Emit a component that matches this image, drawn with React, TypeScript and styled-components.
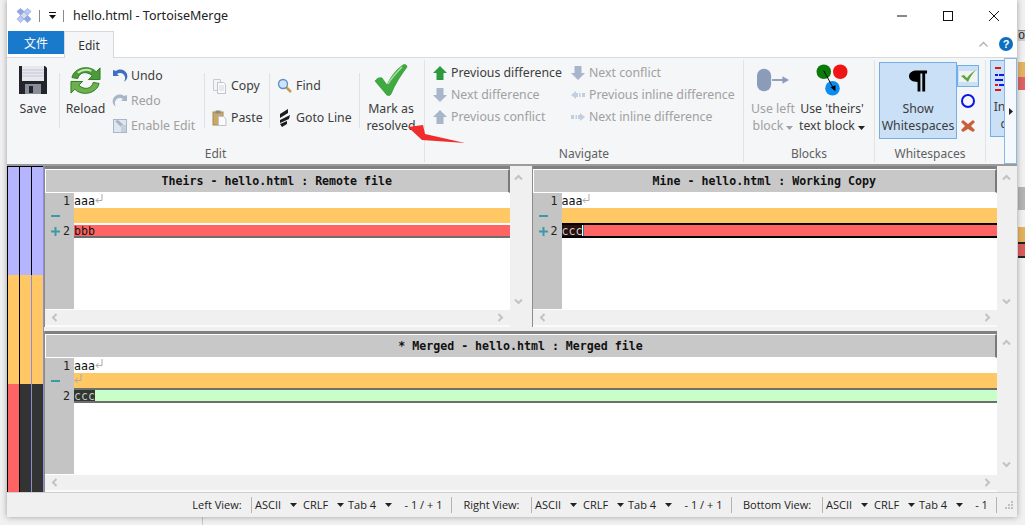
import { FC, ReactNode } from 'react';
import styled, { createGlobalStyle } from 'styled-components';

const GlobalStyle = createGlobalStyle`
  html, body {
    margin: 0;
    padding: 0;
    height: 525px;
    overflow: hidden;
    background: #f1f1f1;
  }
  * { box-sizing: border-box; }
`;

const Desktop = styled.div`
  position: relative;
  width: 1025px;
  height: 525px;
  padding: 0 8px 8px 7px;
  background: #f1f1f1;
  overflow: hidden;
`;

// bits of the window behind this one
const BackEdge = styled.div<{ $top: number; $h: number; $color: string }>`
  position: absolute;
  right: 0;
  width: 7px;
  top: ${({ $top }) => $top}px;
  height: ${({ $h }) => $h}px;
  background: ${({ $color }) => $color};
  font-family: "Liberation Mono", monospace;
  font-size: 12px;
  line-height: 10px;
  overflow: hidden;
  color: #222;
`;

const BackLine = styled.div`
  position: absolute;
  left: 202px;
  top: 517px;
  width: 1px;
  height: 8px;
  background: #c8c8c8;
`;

const Window = styled.div`
  position: relative;
  width: 1010px;
  height: 517px;
  background: #fff;
  display: flex;
  flex-direction: column;
  font-family: "Noto Sans", "Noto Sans CJK SC", sans-serif;
  font-size: 12.3px;
  color: #3c3c3c;
  box-shadow: 0 0 6px rgba(0, 0, 0, 0.35);
`;

const TitleBar = styled.div`
  height: 31px;
  display: flex;
  align-items: center;
  padding-left: 9px;
  background: #fff;
`;

const TitleSep = styled.div`
  width: 1px;
  height: 12px;
  background: #8a8a8a;
  margin: 0 9px 0 7px;
`;

const TitleText = styled.div`
  font-size: 12.5px;
  color: #222;
`;

const WindowButtons = styled.div`
  margin-left: auto;
  display: flex;
`;

const WindowButton = styled.div`
  width: 46px;
  height: 31px;
  display: flex;
  align-items: center;
  justify-content: center;
`;

const TabRow = styled.div`
  height: 26px;
  display: flex;
  position: relative;
  padding-left: 1px;
  background: #fff;
`;

const FileTab = styled.div`
  width: 56px;
  height: 23px;
  background: #1979ca;
  color: #fff;
  display: flex;
  align-items: center;
  justify-content: center;
  font-size: 12px;
`;

const EditTab = styled.div`
  width: 50px;
  height: 27px;
  background: #f5f6f7;
  border: 1px solid #d5d7da;
  border-bottom: none;
  display: flex;
  align-items: center;
  justify-content: center;
  font-size: 12px;
  color: #333;
  z-index: 1;
`;

const TabRight = styled.div`
  margin-left: auto;
  display: flex;
  align-items: center;
  gap: 11px;
  padding-right: 4px;
  height: 26px;
`;

const Ribbon = styled.div`
  height: 109px;
  flex: none;
  background: #f5f6f7;
  border-top: 1px solid #d8dadd;
  border-bottom: 2px solid #9b9b9b;
  display: flex;
  overflow: hidden;
  position: relative;
`;

const Group = styled.div<{ $w: number }>`
  width: ${({ $w }) => $w}px;
  flex: none;
  display: flex;
  flex-direction: column;
  border-right: 1px solid #e2e3e5;
  margin: 2px 0;
`;

const GroupBody = styled.div<{ $pad?: number }>`
  height: 85px;
  display: flex;
  padding-left: ${({ $pad }) => $pad ?? 0}px;
`;

const GroupLabel = styled.div`
  height: 17px;
  text-align: center;
  font-size: 12px;
  line-height: 17px;
  color: #5f5f5f;
`;

const LargeButton = styled.div<{ $w: number; $off?: boolean; $on?: boolean }>`
  width: ${({ $w }) => $w}px;
  flex: none;
  height: ${({ $on }) => ($on ? 77 : 78)}px;
  margin-top: ${({ $on }) => ($on ? 2 : 0)}px;
  display: flex;
  flex-direction: column;
  align-items: center;
  text-align: center;
  line-height: 17px;
  padding-top: 3px;
  color: ${({ $off }) => ($off ? '#a0a0a0' : '#3c3c3c')};
  ${({ $on }) => $on && 'background: #c9e0f7; border: 1px solid #75aee4;'}
  white-space: nowrap;
`;

const ClippedButton = styled(LargeButton)`
  margin-left: 4px;
`;

const LargeIcon = styled.div<{ $h: number }>`
  height: ${({ $h }) => $h}px;
  display: flex;
  align-items: center;
  justify-content: center;
`;

const LargeLabel = styled.span<{ $top?: number }>`
  margin-top: ${({ $top }) => $top ?? 3}px;
`;

const VSep = styled.div`
  width: 1px;
  height: 55px;
  margin: 13px 4px 0 0;
  background: #e0e1e3;
  flex: none;
`;

const Stack = styled.div<{ $gap: number; $top: number; $w: number; $left?: number }>`
  width: ${({ $w }) => $w}px;
  flex: none;
  display: flex;
  flex-direction: column;
  gap: ${({ $gap }) => $gap}px;
  padding-top: ${({ $top }) => $top}px;
  padding-left: ${({ $left }) => $left ?? 0}px;
`;

const SmallButton = styled.div<{ $off?: boolean }>`
  height: 16px;
  display: flex;
  align-items: center;
  gap: 3px;
  white-space: nowrap;
  line-height: 16px;
  color: ${({ $off }) => ($off ? '#a0a0a0' : '#3c3c3c')};
`;

const IconSlot = styled.span`
  width: 16px;
  height: 16px;
  flex: none;
  display: flex;
  align-items: center;
  justify-content: center;
`;

const MiniToggle = styled.div<{ $on?: boolean }>`
  width: 22px;
  height: 22px;
  display: flex;
  align-items: center;
  justify-content: center;
  ${({ $on }) => $on && 'background: #c9e0f7; border: 1px solid #75aee4;'}
`;

const ScrollTab = styled.div`
  position: absolute;
  right: 0;
  top: 0;
  bottom: 0;
  width: 13px;
  background: #f5f8fc;
  border: 1px solid #8ab8e6;
  display: flex;
  align-items: center;
  justify-content: center;
`;

const Arrow = styled.svg`
  position: absolute;
  left: 401px;
  top: 124px;
  z-index: 5;
`;

const Turned = styled.svg<{ $turn?: string }>`
  transform: ${({ $turn }) => $turn ?? 'none'};
  flex: none;
`;

const Workspace = styled.div`
  flex: 1;
  display: flex;
  background: #f0f0f0;
  min-height: 0;
`;

const Locator = styled.div`
  width: 37px;
  flex: none;
  display: flex;
  padding: 1px 0 0 1px;
  border-right: 1px solid #8c8cd8;
  background: #000;
  gap: 1px;
`;

const LocatorColumn = styled.div`
  flex: 1;
  display: flex;
  flex-direction: column;
`;

const LocatorBlock = styled.div<{ $h: number; $color: string; $edge?: boolean }>`
  height: ${({ $h }) => $h}px;
  background: ${({ $color }) => $color};
  ${({ $edge }) => $edge && 'box-shadow: -1px 0 0 #8c8cd8;'}
`;

const Views = styled.div`
  flex: 1;
  display: flex;
  flex-direction: column;
  gap: 4px;
  min-width: 0;
  padding-right: 2px;
`;

const TopViews = styled.div`
  height: 161px;
  flex: none;
  display: flex;
  gap: 4px;
`;

const Pane = styled.div`
  flex: 1;
  min-width: 0;
  min-height: 0;
  display: flex;
  border-left: 1px solid #8c8c8c;
`;

const ViewColumn = styled.div`
  flex: 1;
  min-width: 0;
  display: flex;
  flex-direction: column;
  background: #fff;
  border-top: 3px solid #808080;
`;

const PaneHeader = styled.div`
  height: 24px;
  flex: none;
  background: #c8c8c8;
  border: 1px solid #fff;
  border-right: 2px solid #7a7a7a;
  display: flex;
  align-items: center;
  justify-content: center;
  font-family: "DejaVu Sans Mono", monospace;
  font-weight: 700;
  font-size: 11.6px;
  color: #111;
`;

const CodeArea = styled.div`
  flex: 1;
  min-height: 0;
  background: #fff;
  overflow: hidden;
`;

const CodeRow = styled.div`
  height: 15px;
  display: flex;
`;

const Gutter = styled.div`
  width: 29px;
  flex: none;
  height: 15px;
  background: #c4c4c4;
  position: relative;
  text-align: right;
  padding-right: 4px;
  font-family: "DejaVu Sans Mono", monospace;
  font-size: 11.6px;
  line-height: 16px;
  color: #222;
`;

const GutterFill = styled.div`
  width: 29px;
  height: 71px;
  background: #c4c4c4;
`;

const CodeLine = styled.div<{ $bg: string; $above?: string; $below?: string }>`
  flex: 1;
  min-width: 0;
  height: 15px;
  background: ${({ $bg }) => $bg};
  ${({ $above, $below }) => $above && $below && `border-top: 2px solid ${$above}; border-bottom: 2px solid ${$below};`}
  display: flex;
  font-family: "DejaVu Sans Mono", monospace;
  font-size: 11.6px;
  line-height: ${({ $above }) => ($above ? 12 : 16)}px;
  color: #111;
`;

const InvertedText = styled.span<{ $bg: string }>`
  background: ${({ $bg }) => $bg};
  color: #c8c8c8;
  height: 11px;
  line-height: 12px;
`;

const Caret = styled.span`
  width: 2px;
  height: 11px;
  background: #0f8a8a;
  border-left: 1px solid #fff;
`;

const VScroll = styled.div<{ $bottom: number }>`
  width: 18px;
  flex: none;
  background: #f0f0f0;
  display: flex;
  flex-direction: column;
  justify-content: space-between;
  align-items: center;
  padding: 8px 0 ${({ $bottom }) => $bottom}px;
`;

const HScroll = styled.div`
  height: 17px;
  flex: none;
  background: #f0f0f0;
  border-bottom: 2px solid #fafafa;
  display: flex;
  justify-content: space-between;
  align-items: center;
  padding: 0 5px;
`;

const StatusBar = styled.div`
  height: 25px;
  flex: none;
  background: #f0f0f0;
  border-top: 1px solid #d0d0d0;
  padding-bottom: 1px;
  display: flex;
  justify-content: flex-end;
  align-items: center;
  font-family: "Open Sans", "Liberation Sans", sans-serif;
  font-size: 11px;
  color: #222;
`;

const StatusCell = styled.div<{ $w: number; $center?: boolean; $left?: number }>`
  width: ${({ $w }) => $w}px;
  flex: none;
  display: flex;
  align-items: center;
  justify-content: ${({ $center }) => ($center ? 'center' : 'flex-start')};
  white-space: nowrap;
  gap: 9px;
  padding-left: ${({ $left }) => $left ?? 0}px;
`;

const StatusSep = styled.div`
  width: 1px;
  height: 16px;
  background: #b4b4b4;
  flex: none;
`;

const Grip = styled.svg`
  margin: 0 4px 0 8px;
  flex: none;
`;

const MarkSvg = styled.svg<{ $top: number }>`
  position: absolute;
  left: 6px;
  top: ${({ $top }) => $top}px;
`;

const ReturnSvg = styled.svg`
  margin-top: 1px;
  flex: none;
`;

const DropCaret: FC<{ color?: string }> = ({ color }) => (
  <svg width="7" height="4" viewBox="0 0 7 4"><path d="M0 0h7L3.500 4z" fill={color ?? '#222'} /></svg>
);

const Chevron: FC<{ dir: 'up' | 'down' | 'left' | 'right' }> = ({ dir }) => {
  const rot = { up: 0, down: 180, left: 270, right: 90 }[dir];
  return (
    <Turned $turn={`rotate(${rot}deg)`} width="9" height="7" viewBox="0 0 9 7">
      <path d="M1 5.500 4.500 2 8 5.500" fill="none" stroke="#c2c2c2" strokeWidth="2" />
    </Turned>
  );
};

const AppIcon = () => (
  <svg width="16" height="15" viewBox="0 0 18 16">
    <g stroke="#6f86c8" strokeWidth="0.5">
      <path d="M5 0 9 3.500 5 7.500 1 3.500z" fill="#8ea6e4" />
      <path d="M13 0 17 3.500 13 7.500 9 3.500z" fill="#b8c8f0" />
      <path d="M5 8 9 12 5 16 1 12z" fill="#b8c8f0" />
      <path d="M13 8 17 12 13 16 9 12z" fill="#8ea6e4" />
      <path d="M9 4 13 8 9 12 5 8z" fill="#d6def5" />
    </g>
  </svg>
);

const SaveIcon = () => (
  <svg width="30" height="30" viewBox="0 0 30 30">
    <path d="M1 1h26l2 2v26H1z" fill="#22262c" />
    <rect x="4" y="1" width="22" height="15" fill="#e6e8ee" />
    <path d="M4 5h22M4 8h22M4 11h22" stroke="#c3c7d2" />
    <rect x="7" y="19" width="16" height="10" fill="#8a8e98" />
    <rect x="11" y="21" width="4" height="7" fill="#22262c" />
  </svg>
);

const ReloadIcon = () => (
  <svg width="33" height="31" viewBox="0 0 34 32">
    <path d="M3 13C5 3 20-1 28 7l4-4v12H20l4-4C18 6 11 7 9 14z" fill="#4d9a3a" stroke="#2f7a20" />
    <path d="M31 19c-2 10-17 14-25 6l-4 4V17h12l-4 4c6 5 13 4 15-3z" fill="#6cb04f" stroke="#2f7a20" />
    <path d="M9 8c4-3 9-4 14-2" stroke="#c6e8b4" strokeWidth="2" fill="none" />
  </svg>
);

const UndoIcon = () => (
  <svg width="16" height="16" viewBox="0 0 16 16">
    <path d="M1 2v6h6L5 6c3-2 7-1 8 3 .3 1.500 0 3-1 5 3-2 4-5 3-8-1.500-4-7-6-11-3z" fill="#3f6fc4" />
  </svg>
);

const RedoIcon = () => (
  <Turned $turn="scaleX(-1)" width="16" height="16" viewBox="0 0 16 16">
    <path d="M1 2v6h6L5 6c3-2 7-1 8 3 .3 1.500 0 3-1 5 3-2 4-5 3-8-1.500-4-7-6-11-3z" fill="#a8b6cc" />
  </Turned>
);

const EnableEditIcon = () => (
  <svg width="16" height="16" viewBox="0 0 16 16">
    <rect x="1.500" y="1.500" width="13" height="13" fill="#dfe6ef" stroke="#a9b5c6" />
    <path d="M3 3l8 8 3-2-8-7z" fill="#a7b4c8" />
    <path d="M9 7h5v7H9z" fill="#c3cfdf" />
  </svg>
);

const CopyIcon = () => (
  <svg width="16" height="16" viewBox="0 0 16 16">
    <path d="M1.500 1.500h7v11h-7z" fill="#f4f4f4" stroke="#c8ccd2" />
    <path d="M5.500 4.500h6l2 2v9h-8z" fill="#fafafa" stroke="#bfc3ca" />
    <path d="M7 8h5M7 10h5M7 12h5" stroke="#d4d7dc" />
  </svg>
);

const PasteIcon = () => (
  <svg width="16" height="16" viewBox="0 0 16 16">
    <rect x="1" y="2" width="10" height="13" fill="#c9a86a" stroke="#a88a50" />
    <rect x="3.500" y="0.500" width="5" height="3" fill="#8a8a8a" />
    <path d="M6.500 6.500h5l2.500 2.500v6.500h-7.500z" fill="#fafafa" stroke="#bfc3ca" />
  </svg>
);

const FindIcon = () => (
  <svg width="16" height="16" viewBox="0 0 16 16">
    <path d="M9 9l5 5" stroke="#c89a48" strokeWidth="2.500" />
    <circle cx="6" cy="6" r="4.500" fill="#cfe4f8" stroke="#5a8ec4" strokeWidth="1.300" />
  </svg>
);

const GotoIcon = () => (
  <svg width="16" height="18" viewBox="0 0 16 18">
    <path d="M11 0 3 5v4l8-5zM13 6 3 11v3l9-4zM10 12l-7 3 2 3 5-3z" fill="#1c1c1c" />
  </svg>
);

const CheckIcon = () => (
  <svg width="34" height="32" viewBox="0 0 34 32">
    <path d="M1 17c2-3 5-4 7-3l5 7C17 12 23 5 29 1c2-1 4 0 4 2-6 8-12 17-16 27-1 2-4 2-5 0z" fill="#3faa3f" stroke="#2c8a2c" strokeWidth="0.600" />
    <path d="M28 3c-5 5-10 10-14 17" stroke="#a8e0a0" strokeWidth="1.500" fill="none" />
  </svg>
);

const NavArrow: FC<{ dir: 'up' | 'down'; color: string }> = ({ dir, color }) => (
  <Turned $turn={dir === 'down' ? 'rotate(180deg)' : undefined} width="16" height="16" viewBox="0 0 16 16">
    <path d="M8 1l7 7h-3.500v7h-7V8H1z" fill={color} />
  </Turned>
);

const InlineArrow: FC<{ flip?: boolean }> = ({ flip }) => (
  <Turned $turn={flip ? 'scaleX(-1)' : undefined} width="16" height="12" viewBox="0 0 16 12">
    <path d="M1 6l5-4v2h2v4H6v2z" fill="#c2cfe0" />
    <path d="M9 4h1.500v4H9zM12 4h3v4h-3z" fill="#c2cfe0" />
  </Turned>
);

const UseLeftIcon = () => (
  <svg width="32" height="24" viewBox="0 0 34 24">
    <rect x="0" y="0" width="15" height="24" rx="7.500" fill="#8b9cbb" />
    <path d="M16 12h12" stroke="#8b9cbb" strokeWidth="2" />
    <path d="M27 8l7 4-7 4z" fill="#8b9cbb" />
  </svg>
);

const UseTheirsIcon = () => (
  <svg width="33" height="32" viewBox="0 0 34 33">
    <circle cx="8" cy="8" r="7.500" fill="#0a7a0a" />
    <circle cx="25" cy="8" r="7.500" fill="#f01414" />
    <circle cx="17" cy="25" r="7.500" fill="#0a8cf0" />
    <path d="M8 7l11 20" stroke="#000" />
    <path d="M15 24l5 4 0-6z" fill="#000" />
  </svg>
);

const PilcrowIcon = () => (
  <svg width="19" height="24" viewBox="0 0 20 24">
    <path d="M8 1h11v3h-2v19h-3V4h-2v19H9V13C4 13 0 11 0 7s4-6 8-6z" fill="#000" />
  </svg>
);

const InlineDiffIcon = () => (
  <svg width="30" height="24" viewBox="0 0 30 24">
    <path d="M0 0h6v2H0zM0 17h3v2H0zM0 22h6v2H0z" fill="#e01414" />
    <path d="M0 7h3v2H0zM4 7h6v2H4zM0 12h8v2H0zM4 17h6v2H4z" fill="#1414e0" />
    <path d="M9 12h3v2H9z" fill="#e01414" />
  </svg>
);

const MiniCheck = () => (
  <svg width="18" height="14" viewBox="0 0 18 14">
    <rect x="0" y="2" width="18" height="11" fill="#f2f2f2" />
    <path d="M2 7l3-1 3 3c2-3 5-6 9-8-3 3-6 7-8 12z" fill="#5aa83c" />
  </svg>
);

const BlueRing = () => (
  <svg width="16" height="16" viewBox="0 0 16 16">
    <circle cx="8" cy="8" r="6" fill="none" stroke="#0a14e6" strokeWidth="2" />
  </svg>
);

const RedCross = () => (
  <svg width="16" height="14" viewBox="0 0 16 14">
    <path d="M3 1l5 4 5-4 2 2-4 4 4 4-2 2-5-3-5 3-2-2 4-4-4-4z" fill="#c8603c" />
  </svg>
);

const HelpIcon = () => (
  <svg width="14" height="14" viewBox="0 0 14 14">
    <circle cx="7" cy="7" r="7" fill="#0d6fc0" />
    <text x="7" y="11" textAnchor="middle" fontSize="11" fontWeight="700" fill="#fff" fontFamily="Liberation Sans">?</text>
  </svg>
);

const ReturnMark = () => (
  <ReturnSvg width="8" height="10" viewBox="0 0 8 10">
    <path d="M7 0v6.500H1M3.500 4 1 6.500 3.500 9" fill="none" stroke="#aaa" />
  </ReturnSvg>
);

const PlusMark = () => (
  <MarkSvg $top={4} width="9" height="9" viewBox="0 0 9 9">
    <path d="M3.500 0h2v3.500H9v2H5.500V9h-2V5.500H0v-2h3.500z" fill="#3c9aa8" />
  </MarkSvg>
);

const MinusMark = () => (
  <MarkSvg $top={7} width="9" height="3" viewBox="0 0 9 3">
    <rect width="9" height="2" fill="#3c9aa8" />
  </MarkSvg>
);

const Row: FC<{ num?: string; mark?: ReactNode; bg: string; above?: string; below?: string; children?: ReactNode }> = ({ num, mark, bg, above, below, children }) => (
  <CodeRow>
    <Gutter>{mark}{num}</Gutter>
    <CodeLine $bg={bg} $above={above} $below={below}>{children}</CodeLine>
  </CodeRow>
);

const Statuses: FC<{ label: string; labelW: number; counts: string; countW: number }> = ({ label, labelW, counts, countW }) => (
  <>
    <StatusCell $w={labelW} $center>{label}</StatusCell>
    <StatusSep />
    <StatusCell $w={51} $left={3}>ASCII <DropCaret /></StatusCell>
    <StatusCell $w={45}>CRLF <DropCaret /></StatusCell>
    <StatusCell $w={48}>Tab 4 <DropCaret /></StatusCell>
    <StatusCell $w={countW} $center>{counts}</StatusCell>
    <StatusSep />
  </>
);

const View: FC<{ title: string; bottom: number; children: ReactNode }> = ({ title, bottom, children }) => (
  <Pane>
    <ViewColumn>
      <PaneHeader>{title}</PaneHeader>
      <CodeArea>
        {children}
        <GutterFill />
      </CodeArea>
      <HScroll><Chevron dir="left" /><Chevron dir="right" /></HScroll>
    </ViewColumn>
    <VScroll $bottom={bottom}><Chevron dir="up" /><Chevron dir="down" /></VScroll>
  </Pane>
);

export default function App() {
  return (
    <Desktop>
      <GlobalStyle />
      <BackEdge $top={30} $h={1} $color="#888" />
      <BackEdge $top={31} $h={10} $color="#ccc">op</BackEdge>
      <BackEdge $top={62} $h={15} $color="#e4b464" />
      <BackEdge $top={77} $h={13} $color="#dc6464" />
      <BackEdge $top={187} $h={23} $color="#b4b4b4" />
      <BackEdge $top={227} $h={15} $color="#e2b25e" />
      <BackEdge $top={242} $h={2} $color="#222" />
      <BackEdge $top={244} $h={12} $color="#d85e5e" />
      <BackEdge $top={256} $h={2} $color="#222" />
      <BackLine />
      <Window>
        <TitleBar>
          <AppIcon />
          <TitleSep />
          <svg width="7" height="7" viewBox="0 0 7 7"><path d="M0 0h7v1H0zM0 3h7L3.500 7z" fill="#111" /></svg>
          <TitleSep />
          <TitleText>hello.html - TortoiseMerge</TitleText>
          <WindowButtons>
            <WindowButton>
              <svg width="10" height="10" viewBox="0 0 10 10"><path d="M0 5h10" stroke="#111" /></svg>
            </WindowButton>
            <WindowButton>
              <svg width="10" height="10" viewBox="0 0 10 10"><rect x=".5" y=".5" width="9" height="9" fill="none" stroke="#111" /></svg>
            </WindowButton>
            <WindowButton>
              <svg width="10" height="10" viewBox="0 0 10 10"><path d="M0 0l10 10M10 0 0 10" stroke="#111" /></svg>
            </WindowButton>
          </WindowButtons>
        </TitleBar>
        <TabRow>
          <FileTab>文件</FileTab>
          <EditTab>Edit</EditTab>
          <TabRight>
            <svg width="9" height="6" viewBox="0 0 9 6"><path d="M.5 5.500 4.500 1.500l4 4" fill="none" stroke="#b0b0b0" strokeWidth="1.300" /></svg>
            <HelpIcon />
          </TabRight>
        </TabRow>
        <Ribbon>
          <Group $w={418}>
            <GroupBody>
              <LargeButton $w={52}>
                <LargeIcon $h={34}><SaveIcon /></LargeIcon>
                <LargeLabel>Save</LargeLabel>
              </LargeButton>
              <VSep />
              <LargeButton $w={43}>
                <LargeIcon $h={34}><ReloadIcon /></LargeIcon>
                <LargeLabel>Reload</LargeLabel>
              </LargeButton>
              <Stack $w={97} $gap={9} $top={8} $left={5}>
                <SmallButton><IconSlot><UndoIcon /></IconSlot>Undo</SmallButton>
                <SmallButton $off><IconSlot><RedoIcon /></IconSlot>Redo</SmallButton>
                <SmallButton $off><IconSlot><EnableEditIcon /></IconSlot>Enable Edit</SmallButton>
              </Stack>
              <VSep />
              <Stack $w={60} $gap={16} $top={18} $left={3}>
                <SmallButton><IconSlot><CopyIcon /></IconSlot>Copy</SmallButton>
                <SmallButton><IconSlot><PasteIcon /></IconSlot>Paste</SmallButton>
              </Stack>
              <VSep />
              <Stack $w={85} $gap={16} $top={18} $left={3}>
                <SmallButton><IconSlot><FindIcon /></IconSlot>Find</SmallButton>
                <SmallButton><IconSlot><GotoIcon /></IconSlot>Goto Line</SmallButton>
              </Stack>
              <VSep />
              <LargeButton $w={54}>
                <LargeIcon $h={34}><CheckIcon /></LargeIcon>
                <LargeLabel>Mark as<br />resolved</LargeLabel>
              </LargeButton>
            </GroupBody>
            <GroupLabel>Edit</GroupLabel>
          </Group>
          <Group $w={319}>
            <GroupBody>
              <Stack $w={145} $gap={6} $top={5} $left={7}>
                <SmallButton><IconSlot><NavArrow dir="up" color="#2a9a3c" /></IconSlot>Previous difference</SmallButton>
                <SmallButton $off><IconSlot><NavArrow dir="down" color="#a8b6cc" /></IconSlot>Next difference</SmallButton>
                <SmallButton $off><IconSlot><NavArrow dir="up" color="#a8b6cc" /></IconSlot>Previous conflict</SmallButton>
              </Stack>
              <Stack $w={170} $gap={6} $top={5}>
                <SmallButton $off><IconSlot><NavArrow dir="down" color="#a8b6cc" /></IconSlot>Next conflict</SmallButton>
                <SmallButton $off><IconSlot><InlineArrow /></IconSlot>Previous inline difference</SmallButton>
                <SmallButton $off><IconSlot><InlineArrow flip /></IconSlot>Next inline difference</SmallButton>
              </Stack>
            </GroupBody>
            <GroupLabel>Navigate</GroupLabel>
          </Group>
          <Group $w={131}>
            <GroupBody $pad={4}>
              <LargeButton $w={50} $off>
                <LargeIcon $h={34}><UseLeftIcon /></LargeIcon>
                <LargeLabel>Use left<br />block <DropCaret color="#a0a0a0" /></LargeLabel>
              </LargeButton>
              <LargeButton $w={68}>
                <LargeIcon $h={34}><UseTheirsIcon /></LargeIcon>
                <LargeLabel>Use 'theirs'<br />text block <DropCaret /></LargeLabel>
              </LargeButton>
            </GroupBody>
            <GroupLabel>Blocks</GroupLabel>
          </Group>
          <Group $w={111}>
            <GroupBody $pad={4}>
              <LargeButton $w={78} $on>
                <LargeIcon $h={30}><PilcrowIcon /></LargeIcon>
                <LargeLabel $top={4}>Show<br />Whitespaces</LargeLabel>
              </LargeButton>
              <Stack $w={22} $gap={3} $top={5}>
                <MiniToggle $on><MiniCheck /></MiniToggle>
                <MiniToggle><BlueRing /></MiniToggle>
                <MiniToggle><RedCross /></MiniToggle>
              </Stack>
            </GroupBody>
            <GroupLabel>Whitespaces</GroupLabel>
          </Group>
          <ClippedButton $w={40} $on>
            <LargeIcon $h={30}><InlineDiffIcon /></LargeIcon>
            <LargeLabel $top={4}>Inline<br />diff</LargeLabel>
          </ClippedButton>
          <ScrollTab>
            <svg width="4" height="7" viewBox="0 0 4 7"><path d="M0 0l4 3.500L0 7z" fill="#222" /></svg>
          </ScrollTab>
        </Ribbon>
        <Arrow width="60" height="22" viewBox="0 0 60 22">
          <path d="M0 3 15 1 17 10 57 19 14 16z" fill="#f02c2c" />
        </Arrow>
        <Workspace>
          <Locator>
            <LocatorColumn>
              <LocatorBlock $h={108} $color="#b4b4ff" />
              <LocatorBlock $h={109} $color="#ffc864" />
              <LocatorBlock $h={108} $color="#ff6464" />
            </LocatorColumn>
            <LocatorColumn>
              <LocatorBlock $h={108} $color="#b4b4ff" />
              <LocatorBlock $h={109} $color="#ffc864" />
              <LocatorBlock $h={108} $color="#333" />
            </LocatorColumn>
            <LocatorColumn>
              <LocatorBlock $h={108} $color="#b4b4ff" />
              <LocatorBlock $h={109} $color="#ffc864" $edge />
              <LocatorBlock $h={108} $color="#333" $edge />
            </LocatorColumn>
          </Locator>
          <Views>
            <TopViews>
              <View title="Theirs - hello.html : Remote file" bottom={22}>
                <Row num="1" bg="#fff">aaa<ReturnMark /></Row>
                <Row mark={<MinusMark />} bg="#ffc864" />
                <Row num="2" mark={<PlusMark />} bg="#ff6464" above="#fff" below="#6e6e6e">bbb</Row>
              </View>
              <View title="Mine - hello.html : Working Copy" bottom={22}>
                <Row num="1" bg="#fff">aaa<ReturnMark /></Row>
                <Row mark={<MinusMark />} bg="#ffc864" />
                <Row num="2" mark={<PlusMark />} bg="#ff6464" above="#000" below="#000">
                  <InvertedText $bg="#2a0f0f">ccc</InvertedText>
                  <Caret />
                </Row>
              </View>
            </TopViews>
            <View title="* Merged - hello.html : Merged file" bottom={24}>
              <Row num="1" bg="#fff">aaa<ReturnMark /></Row>
              <Row mark={<MinusMark />} bg="#ffc864"><ReturnMark /></Row>
              <Row num="2" bg="#c8ffc8" above="#6e6e6e" below="#6e6e6e">
                <InvertedText $bg="#303830">ccc</InvertedText>
              </Row>
            </View>
          </Views>
        </Workspace>
        <StatusBar>
          <Statuses label="Left View:" labelW={68} counts="- 1 / + 1" countW={55} />
          <Statuses label="Right View:" labelW={79} counts="- 1 / + 1" countW={55} />
          <Statuses label="Bottom View:" labelW={90} counts="- 1" countW={29} />
          <Grip width="8" height="8" viewBox="0 0 8 8">
            <path d="M6 0h2v2H6zM3 3h2v2H3zM6 3h2v2H6zM0 6h2v2H0zM3 6h2v2H3zM6 6h2v2H6z" fill="#c0c0c0" />
          </Grip>
        </StatusBar>
      </Window>
    </Desktop>
  );
}
